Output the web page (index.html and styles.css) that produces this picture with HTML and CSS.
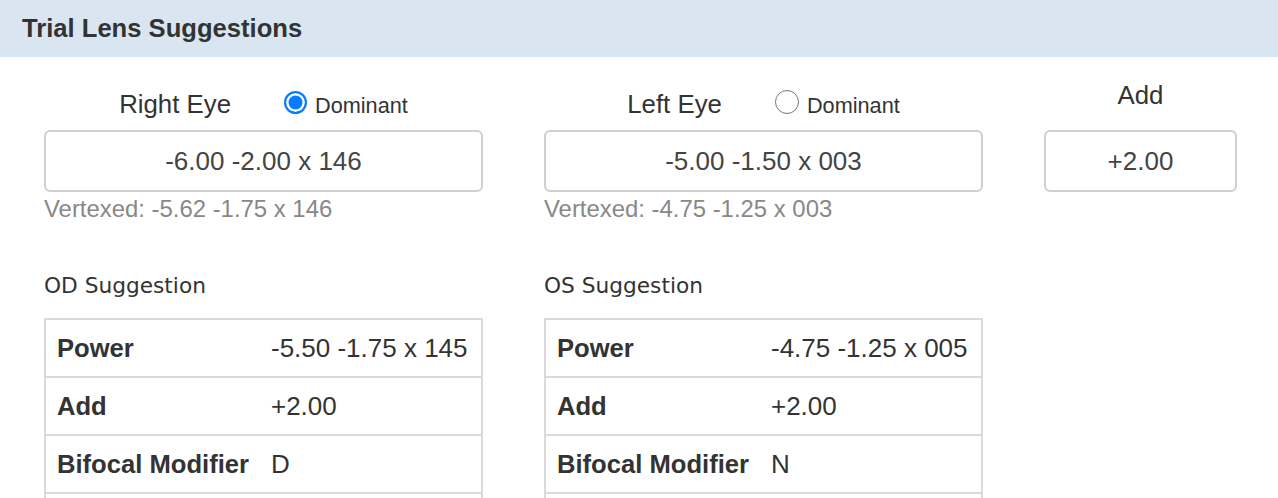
FILE: index.html
```html
<!DOCTYPE html>
<html lang="en">
<head>
<meta charset="utf-8">
<title>Trial Lens Suggestions</title>
<link rel="stylesheet" href="styles.css">
</head>
<body>
  <header class="panel-heading">Trial Lens Suggestions</header>
  <main class="panel-body">
    <section class="rx-grid">
      <div class="rx-col">
        <div class="rx-label">Right Eye<span class="dominant"><span class="radio checked"></span><span class="dominant-text">Dominant</span></span></div>
        <div class="rx-input">-6.00 -2.00 x 146</div>
        <div class="vertexed">Vertexed: -5.62 -1.75 x 146</div>
      </div>
      <div class="rx-col">
        <div class="rx-label">Left Eye<span class="dominant"><span class="radio"></span><span class="dominant-text">Dominant</span></span></div>
        <div class="rx-input">-5.00 -1.50 x 003</div>
        <div class="vertexed">Vertexed: -4.75 -1.25 x 003</div>
      </div>
      <div class="rx-col">
        <div class="rx-label add-label">Add</div>
        <div class="rx-input">+2.00</div>
      </div>
    </section>
    <section class="suggest-grid">
      <div class="suggest-col">
        <h3 class="suggest-title">OD Suggestion</h3>
        <table class="suggest-table">
          <tr><th>Power</th><td>-5.50 -1.75 x 145</td></tr>
          <tr><th>Add</th><td>+2.00</td></tr>
          <tr><th>Bifocal Modifier</th><td>D</td></tr>
          <tr class="row-more"><th></th><td></td></tr>
        </table>
      </div>
      <div class="suggest-col">
        <h3 class="suggest-title">OS Suggestion</h3>
        <table class="suggest-table">
          <tr><th>Power</th><td>-4.75 -1.25 x 005</td></tr>
          <tr><th>Add</th><td>+2.00</td></tr>
          <tr><th>Bifocal Modifier</th><td>N</td></tr>
          <tr class="row-more"><th></th><td></td></tr>
        </table>
      </div>
    </section>
  </main>
</body>
</html>
```
FILE: styles.css
```css
html, body {
  margin: 0;
  padding: 0;
  background: #fff;
}
body {
  font-family: "Liberation Sans", Arial, Helvetica, sans-serif;
  font-size: 25.6px;
  color: #333;
}
.panel-heading {
  height: 57px;
  line-height: 57px;
  padding-left: 22px;
  background: #d9e6f1;
  font-weight: bold;
  font-size: 25.6px;
  color: #333;
}
.panel-body {
  padding-left: 44px;
}
.rx-grid {
  display: grid;
  grid-template-columns: 439px 439px 193px;
  column-gap: 61px;
}
.suggest-grid {
  display: grid;
  grid-template-columns: 439px 439px;
  column-gap: 61px;
  margin-top: 49px;
}
.rx-label {
  box-sizing: border-box;
  height: 73px;
  padding-top: 32px;
  line-height: 30px;
  text-align: center;
  font-size: 25.8px;
  color: #333;
  white-space: nowrap;
}
.add-label {
  padding-top: 23px;
}
.dominant {
  margin-left: 53px;
}
.radio {
  display: inline-block;
  box-sizing: border-box;
  width: 24px;
  height: 24px;
  border-radius: 50%;
  border: 1.5px solid #777;
  background: #fff;
  vertical-align: -1px;
}
.radio.checked {
  width: 23px;
  height: 23px;
  border: 2.5px solid #0a7aff;
  background: #0a7aff;
  box-shadow: inset 0 0 0 2.5px #fff;
}
.dominant-text {
  margin-left: 8px;
  font-size: 21.7px;
  color: #333;
}
.rx-input {
  box-sizing: border-box;
  height: 62px;
  border: 2px solid #cfcfcf;
  border-radius: 6px;
  text-align: center;
  line-height: 58px;
  font-size: 26px;
  color: #444;
}
.vertexed {
  margin-top: 3px;
  font-size: 23.9px;
  line-height: 28.6px;
  color: #888;
  white-space: nowrap;
}
.suggest-title {
  margin: 0 0 20px 0;
  font-family: "DejaVu Sans", Verdana, sans-serif;
  font-weight: normal;
  font-size: 21.7px;
  line-height: 25px;
  color: #333;
}
.suggest-table {
  width: 100%;
  border-collapse: collapse;
  border: 2px solid #dadada;
}
.suggest-table th,
.suggest-table td {
  border-top: 2px solid #dadada;
  padding: 12px 11px;
  line-height: 32px;
  font-size: 25.6px;
  text-align: left;
  vertical-align: middle;
  color: #333;
}
.suggest-table td {
  font-size: 26px;
}
.suggest-table th {
  width: 1%;
  white-space: nowrap;
  font-weight: bold;
}
.suggest-table .row-more th,
.suggest-table .row-more td {
  height: 32px;
}
```
